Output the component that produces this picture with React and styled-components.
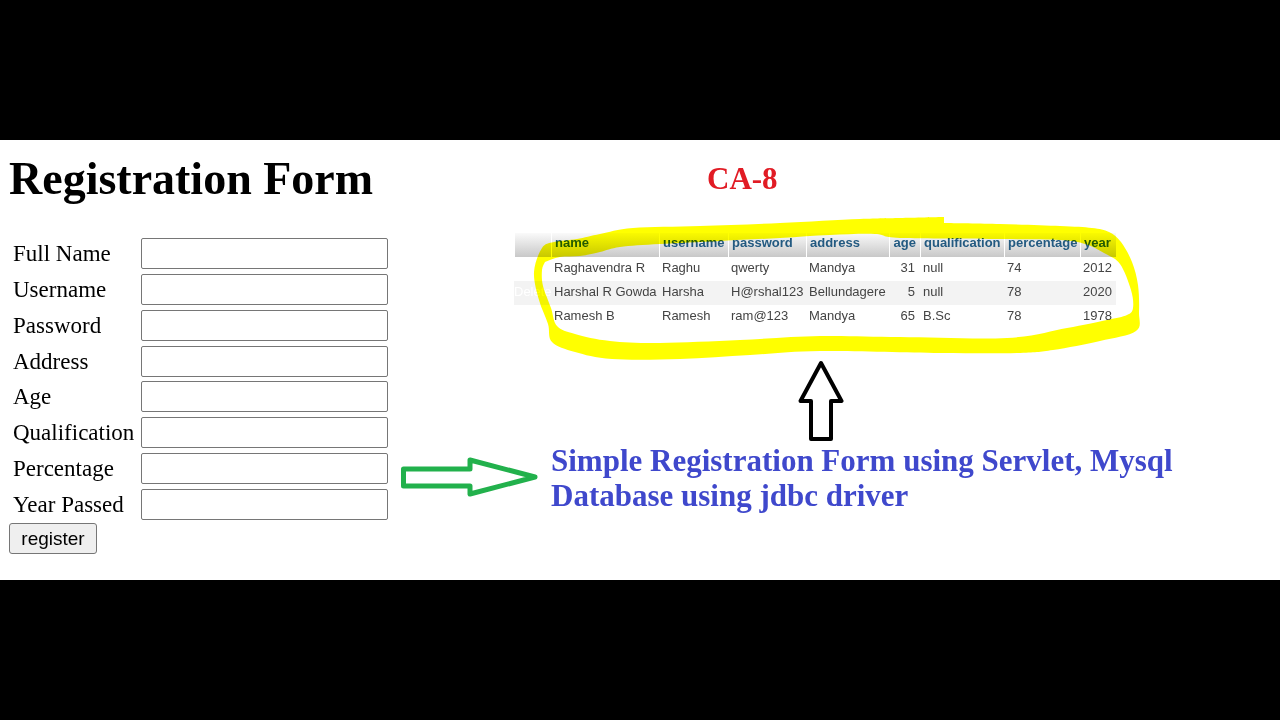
import React, { useId } from "react";
import styled, { createGlobalStyle } from "styled-components";

const GlobalStyle = createGlobalStyle`
  * { box-sizing: border-box; }
  body {
    margin: 0;
    background: #000;
    color: #000;
    font-family: "Liberation Serif", "Times New Roman", serif;
  }
`;

const Page = styled.main`
  min-height: 100vh;
  display: flex;
  flex-direction: column;
  justify-content: center;
`;

const Sheet = styled.div`
  display: grid;
  grid-template-columns: 388px 126px 1fr;
  min-height: 440px;
  background: #fff;
`;

const Form = styled.form`
  padding: 13px 0 24px 9px;
`;

const Title = styled.h1`
  margin: 0 0 31px;
  font-size: 46px;
  line-height: 52px;
  white-space: nowrap;
`;

const Fields = styled.div`
  display: grid;
  grid-auto-rows: 1fr;
  min-height: 286px;
`;

const Field = styled.div`
  display: grid;
  grid-template-columns: 128px 1fr;
  align-items: center;
  padding-left: 4px;
`;

const Label = styled.label`
  font-size: 23px;
  line-height: 25px;
`;

const TextInput = styled.input`
  width: 100%;
  height: 31px;
  padding: 0 4px;
  border: 1px solid #767676;
  border-radius: 2px;
  background: #fff;
  font-size: 19px;
`;

const Submit = styled.button`
  height: 31px;
  width: 88px;
  margin-top: 1px;
  padding: 0;
  border: 1px solid #767676;
  border-radius: 3px;
  background: #efefef;
  color: #000;
  font-family: "Liberation Sans", Arial, sans-serif;
  font-size: 19px;
`;

const ArrowColumn = styled.div`
  padding: 316px 0 0 12px;
`;

const Side = styled.section`
  padding-top: 21px;
`;

const Batch = styled.h2`
  margin: 0 0 36px 193px;
  color: #e11b24;
  font-size: 31px;
  line-height: 36px;
`;

const Result = styled.div`
  position: relative;
  width: 602px;
`;

const Marker = styled.svg`
  position: absolute;
  top: -23px;
  left: 0;
  mix-blend-mode: multiply;
  pointer-events: none;
`;

const Table = styled.table`
  width: 100%;
  table-layout: fixed;
  border-collapse: separate;
  border-spacing: 0;
  font-family: "Liberation Sans", Arial, sans-serif;
  font-size: 13px;
  line-height: 16px;
  color: #444;
`;

const HeadCell = styled.th`
  height: 24px;
  padding: 0 4px 4px 3px;
  border-left: 1px solid #fff;
  background: linear-gradient(#fafafa, #c8c8c8);
  color: #235a81;
  text-align: ${(p) => (p.$right ? "right" : "left")};
  white-space: nowrap;
`;

const Row = styled.tr`
  background: ${(p) => (p.$shaded ? "#f3f3f3" : "#fff")};
`;

const Cell = styled.td`
  height: 24px;
  padding: 0 5px 2px 3px;
  text-align: ${(p) => (p.$right ? "right" : "left")};
  white-space: nowrap;
`;

const ActionCell = styled(Cell)`
  padding: 0 0 2px;
  color: #fff;
`;

const UpArrow = styled.svg`
  display: block;
  margin: 31px 0 0 284px;
`;

const Caption = styled.p`
  max-width: 660px;
  margin: 1px 0 0 37px;
  color: #3f48cc;
  font-size: 31px;
  font-weight: bold;
  line-height: 35px;
`;

const fields = [
  "Full Name",
  "Username",
  "Password",
  "Address",
  "Age",
  "Qualification",
  "Percentage",
  "Year Passed",
];

const columns = [
  { name: "name", width: 108 },
  { name: "username", width: 69 },
  { name: "password", width: 78 },
  { name: "address", width: 83 },
  { name: "age", width: 31, right: true },
  { name: "qualification", width: 84 },
  { name: "percentage", width: 76 },
  { name: "year", width: 36 },
];

const records = [
  ["Raghavendra R", "Raghu", "qwerty", "Mandya", "31", "null", "74", "2012"],
  ["Harshal R Gowda", "Harsha", "H@rshal123", "Bellundagere", "5", "null", "78", "2020"],
  ["Ramesh B", "Ramesh", "ram@123", "Mandya", "65", "B.Sc", "78", "1978"],
];

// Outer and inner edges of the highlighter stroke, clockwise.
const outerEdge = [
  [944, 223], [1000, 224], [1060, 226], [1092, 228], [1109, 232], [1121, 242], [1132, 262],
  [1138, 285], [1139, 312], [1136, 331], [1100, 341], [1053, 350], [1017, 353], [940, 353],
  [820, 351], [750, 355], [680, 359], [612, 359], [575, 352], [552, 342], [548, 324],
  [539, 300], [534, 272], [542, 248], [554, 242], [577, 239], [600, 234], [633, 228],
  [700, 226], [780, 223], [860, 219], [900, 218], [944, 217],
];
const innerEdge = [
  [545, 262], [560, 257], [580, 256], [600, 252], [620, 247], [660, 244], [720, 241],
  [780, 238], [830, 235], [875, 234], [900, 238], [1000, 239], [1060, 240], [1085, 244],
  [1104, 253], [1120, 264], [1131, 290], [1133, 308], [1127, 315], [1107, 320], [1067, 328],
  [1007, 338], [900, 337], [820, 336], [740, 340], [660, 343], [610, 341], [575, 334],
  [557, 326], [551, 308], [543, 286], [542, 270], [545, 262],
];

function smoothPath(points) {
  let d = `M${points[0].join(" ")}`;
  for (let i = 0; i < points.length - 1; i += 1) {
    const a = points[i - 1] || points[i];
    const b = points[i];
    const c = points[i + 1];
    const e = points[i + 2] || c;
    d += `C${b[0] + (c[0] - a[0]) / 6} ${b[1] + (c[1] - a[1]) / 6} `;
    d += `${c[0] - (e[0] - b[0]) / 6} ${c[1] - (e[1] - b[1]) / 6} ${c[0]} ${c[1]}`;
  }
  return `${d}Z`;
}

function FormField({ text }) {
  const id = useId();
  return (
    <Field>
      <Label htmlFor={id}>{text}</Label>
      <TextInput id={id} type={text === "Password" ? "password" : "text"} />
    </Field>
  );
}

export default function App() {
  return (
    <Page>
      <GlobalStyle />
      <Sheet>
        <Form onSubmit={(e) => e.preventDefault()}>
          <Title>Registration Form</Title>
          <Fields>
            {fields.map((f) => (
              <FormField key={f} text={f} />
            ))}
          </Fields>
          <Submit type="submit">register</Submit>
        </Form>
        <ArrowColumn>
          <svg width="140" height="44" viewBox="400 456 140 44" aria-hidden="true">
            <path d="M403.500 469H470V460L535 477L470 494V486H403.500Z" fill="none" stroke="#22b14c" strokeWidth="5" strokeLinejoin="round" />
          </svg>
        </ArrowColumn>
        <Side>
          <Batch>CA-8</Batch>
          <Result>
            <Table>
              <colgroup>
                <col style={{ width: 37 }} />
                {columns.map((c) => (
                  <col key={c.name} style={{ width: c.width }} />
                ))}
              </colgroup>
              <thead>
                <tr>
                  <HeadCell />
                  {columns.map((c) => (
                    <HeadCell key={c.name} scope="col" $right={c.right}>{c.name}</HeadCell>
                  ))}
                </tr>
              </thead>
              <tbody>
                {records.map((r, i) => (
                  <Row key={r[0]} $shaded={i === 1}>
                    <ActionCell>{i === 1 ? "Delete" : ""}</ActionCell>
                    {r.map((v, j) => (
                      <Cell key={columns[j].name} $right={columns[j].right}>{v}</Cell>
                    ))}
                  </Row>
                ))}
              </tbody>
            </Table>
            <Marker width="640" height="160" viewBox="514 210 640 160" aria-hidden="true">
              <path fill="#ff0" fillRule="evenodd" d={smoothPath(outerEdge) + smoothPath(innerEdge)} />
            </Marker>
          </Result>
          <UpArrow width="46" height="82" viewBox="798 360 46 82" aria-hidden="true">
            <path d="M821 363L841.500 401H831V439H811V401H800.500Z" fill="#fff" stroke="#000" strokeWidth="4" strokeLinejoin="round" />
          </UpArrow>
          <Caption>Simple Registration Form using Servlet, Mysql Database using jdbc driver</Caption>
        </Side>
      </Sheet>
    </Page>
  );
}
